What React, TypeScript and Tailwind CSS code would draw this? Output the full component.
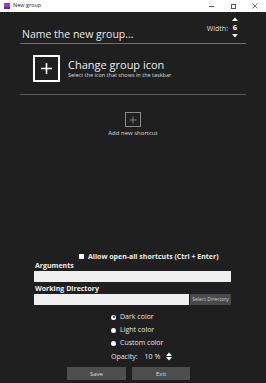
import { useState } from "react";

function TitleBar() {
  return (
    <div className="h-[12px] bg-white flex items-center shrink-0">
      <div className="ml-[4px] w-[6px] h-[6px] bg-[#8a3fd1] flex items-end">
        <div className="w-full h-[2px] bg-[#5b2a9c]" />
      </div>
      <span className="ml-[3px] text-[5.5px] leading-none text-[#222]">New group</span>
      <div className="ml-auto flex items-center text-[#444]">
        <div className="w-[22px] flex justify-center">
          <div className="w-[5px] h-px bg-[#555]" />
        </div>
        <div className="w-[22px] flex justify-center">
          <div className="w-[5px] h-[5px] border border-[#555]" />
        </div>
        <div className="w-[22px] flex justify-center">
          <svg width="6" height="6" viewBox="0 0 6 6">
            <path d="M0.5 0.5L5.5 5.5M5.5 0.5L0.5 5.5" stroke="#555" strokeWidth="0.8" />
          </svg>
        </div>
      </div>
    </div>
  );
}

function Arrow({ up }: { up?: boolean }) {
  return (
    <svg width="6" height="4" viewBox="0 0 6 4">
      <path d={up ? "M0 4L3 0.5L6 4Z" : "M0 0L3 3.5L6 0Z"} fill="white" />
    </svg>
  );
}

export default function App() {
  const [color, setColor] = useState("dark");
  const colors = [
    { key: "dark", label: "Dark color" },
    { key: "light", label: "Light color" },
    { key: "custom", label: "Custom color" },
  ];

  return (
    <div className="w-[266px] h-[383px] bg-[#1f1f1f] flex flex-col overflow-hidden text-white font-['Open_Sans',sans-serif]">
      <TitleBar />

      {/* 그룹 이름 */}
      <div className="mx-[20px] h-[32px] shrink-0 border-b border-[#6e6e6e] flex items-end justify-between pb-[4px]">
        <span className="ml-[2px] text-[10.5px] leading-none text-[#e8e8e8]">Name the new group...</span>
        <div className="flex items-center mr-[8px] mb-[1px]">
          <span className="text-[7px] leading-none text-[#ddd] mt-[2px]">Width:</span>
          <div className="ml-[4px] flex flex-col items-center gap-[3px]">
            <Arrow up />
            <span className="text-[7.5px] font-bold leading-none">6</span>
            <Arrow />
          </div>
        </div>
      </div>

      {/* 아이콘 변경 */}
      <div className="mx-[20px] h-[51px] shrink-0 border-b border-[#5a5a5a] flex items-start pt-[11px] pl-[13px]">
        <div className="w-[27px] h-[27px] border-2 border-white flex items-center justify-center">
          <svg width="13" height="13" viewBox="0 0 13 13">
            <path d="M6.5 1V12M1 6.5H12" stroke="white" strokeWidth="1.6" />
          </svg>
        </div>
        <div className="ml-[8px] mt-[4px] flex flex-col">
          <span className="text-[11px] leading-none text-[#eee]">Change group icon</span>
          <span className="mt-[3px] text-[5.5px] leading-none text-[#ddd]">Select the icon that shows in the taskbar</span>
        </div>
      </div>

      {/* 바로가기 추가 */}
      <div className="mt-[17px] flex flex-col items-center">
        <div className="w-[16px] h-[15px] border border-[#8a8a8a] flex items-center justify-center">
          <svg width="8" height="8" viewBox="0 0 8 8">
            <path d="M4 0.5V7.5M0.5 4H7.5" stroke="#9a9a9a" strokeWidth="0.8" />
          </svg>
        </div>
        <span className="mt-[3px] text-[6px] leading-none text-[#ddd]">Add new shortcut</span>
      </div>

      <div className="flex-1" />

      {/* 옵션 */}
      <div className="flex items-center pl-[79px]">
        <div className="w-[5px] h-[5px] bg-white" />
        <span className="ml-[4px] text-[7px] font-bold leading-none text-[#eee]">Allow open-all shortcuts (Ctrl + Enter)</span>
      </div>

      <div className="mt-[2px] pl-[35px] text-[7px] font-bold leading-none text-[#eee]">Arguments</div>
      <div className="mt-[2px] ml-[34px] w-[197px] h-[11px] bg-[#f0f0f0]" />

      <div className="mt-[3px] pl-[35px] text-[7px] font-bold leading-none text-[#eee]">Working Directory</div>
      <div className="mt-[2px] ml-[34px] w-[197px] h-[11px] flex">
        <div className="flex-1 bg-[#f0f0f0]" />
        <button className="ml-px w-[41px] bg-[#4a4a4a] text-[5px] leading-none text-[#ccc]">Select Directory</button>
      </div>

      <div className="mt-[8px] pl-[111px] flex flex-col gap-[5px]">
        {colors.map((c) => (
          <label key={c.key} className="flex items-center cursor-pointer" onClick={() => setColor(c.key)}>
            <span className="w-[5px] h-[5px] rounded-full bg-white flex items-center justify-center">
              {color === c.key && <span className="w-[2px] h-[2px] rounded-full bg-[#1f1f1f]" />}
            </span>
            <span className="ml-[4px] text-[7px] leading-[8px] text-[#e6e6e6]">{c.label}</span>
          </label>
        ))}
        <div className="flex items-center">
          <span className="text-[7px] leading-[8px] text-[#e6e6e6]">Opacity:</span>
          <span className="ml-[7px] text-[7px] leading-[8px] text-[#e6e6e6]">10 %</span>
          <div className="ml-[6px] flex flex-col gap-[1px]">
            <Arrow up />
            <Arrow />
          </div>
        </div>
      </div>

      <div className="mt-[6px] mb-[3px] flex gap-[6px] pl-[67px]">
        <button className="w-[59px] h-[13px] bg-[#4d4d4d] text-[6px] leading-none text-[#ddd]">Save</button>
        <button className="w-[58px] h-[13px] bg-[#4d4d4d] text-[6px] leading-none text-[#ddd]">Exit</button>
      </div>
    </div>
  );
}
